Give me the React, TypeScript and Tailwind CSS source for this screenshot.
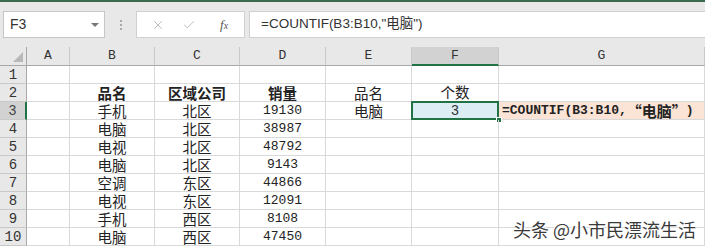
import { X, Check } from 'lucide-react';

const cols = ['A', 'B', 'C', 'D', 'E', 'F', 'G'];

const rows: { b?: string; c?: string; d?: string; e?: string; f?: string; head?: boolean }[] = [
  {},
  { b: '品名', c: '区域公司', d: '销量', e: '品名', f: '个数', head: true },
  { b: '手机', c: '北区', d: '19130', e: '电脑', f: '3' },
  { b: '电脑', c: '北区', d: '38987' },
  { b: '电视', c: '北区', d: '48792' },
  { b: '电脑', c: '北区', d: '9143' },
  { b: '空调', c: '东区', d: '44866' },
  { b: '电视', c: '东区', d: '12091' },
  { b: '手机', c: '西区', d: '8108' },
  { b: '电脑', c: '西区', d: '47450' },
];

const cjk = "font-['Noto_Sans_CJK_SC',sans-serif]";
const mono = "font-['Liberation_Mono','Noto_Sans_CJK_SC',monospace]";
const cell = 'h-[18px] leading-[18px] border-r border-b border-[#d9d9d9] flex items-center justify-center whitespace-nowrap overflow-visible';

export default function App() {
  return (
    <div className="relative w-[705px] h-[247px] overflow-hidden bg-white text-[#222]">
      {/* top strip */}
      <div className="h-[2px] bg-[#3d6b50]" />

      {/* formula bar */}
      <div className="h-[36px] bg-[#e8e8e8] flex items-end pl-[3px]">
        <div className="w-[102px] h-[27px] bg-white border border-[#c6c6c6] flex items-center justify-between pl-[6px] pr-[5px]">
          <span className="font-['Liberation_Sans',sans-serif] text-[14px] text-[#333]">F3</span>
          <span className="w-0 h-0 border-l-[4px] border-r-[4px] border-t-[4px] border-l-transparent border-r-transparent border-t-[#777]" />
        </div>
        <div className="w-[31px] h-[27px] flex flex-col items-center justify-center gap-[2px]">
          <span className="w-[2px] h-[2px] bg-[#aaa]" />
          <span className="w-[2px] h-[2px] bg-[#aaa]" />
          <span className="w-[2px] h-[2px] bg-[#aaa]" />
        </div>
        <div className="w-[109px] h-[27px] bg-white border border-[#d0d0d0] flex items-center pl-[14px]">
          <X className="w-[14px] h-[14px] text-[#b5b5b5]" strokeWidth={1.5} />
          <Check className="w-[14px] h-[14px] text-[#b5b5b5] ml-[17px]" strokeWidth={1.5} />
          <span className="ml-[24px] font-['Liberation_Serif',serif] italic text-[13px] text-[#555]">
            f<span className="text-[10px]">x</span>
          </span>
        </div>
        <div className="ml-[4px] flex-1 h-[27px] bg-white border border-[#d0d0d0] border-r-0 flex items-center pl-[11px]">
          <span className="font-['Liberation_Sans','Noto_Sans_CJK_SC',sans-serif] text-[13.5px] text-[#333]">
            =COUNTIF(B3:B10,"电脑")
          </span>
        </div>
      </div>

      {/* gap above headers */}
      <div className="h-[9px] bg-[#e8e8e8]" />

      {/* sheet */}
      <div className="grid grid-cols-[27px_43px_85px_85px_86px_86px_87px_206px]">
        {/* column headers */}
        <div className="h-[19px] bg-[#e8e8e8] border-r border-b border-[#a8a8a8] flex items-end justify-end pr-[3px] pb-[3px]">
          <svg width="10" height="10" viewBox="0 0 10 10">
            <path d="M10 0 L10 10 L0 10 Z" fill="#b8b8b8" />
          </svg>
        </div>
        {cols.map(c => (
          <div
            key={c}
            className={`h-[19px] border-r border-[#c8c8c8] flex items-center justify-center ${mono} text-[13px] ${
              c === 'F' ? 'bg-[#d2d2d2] border-b-2 border-b-[#217346] text-[#333]' : 'bg-[#e8e8e8] border-b border-b-[#a8a8a8] text-[#333]'
            }`}
          >
            {c}
          </div>
        ))}

        {rows.map((r, i) => {
          const n = i + 1;
          const sel = n === 3;
          const txt = r.head ? 'font-bold' : '';
          return [
            <div
              key={`h${n}`}
              className={`h-[18px] leading-[18px] border-b border-[#c8c8c8] flex items-center justify-center ${mono} text-[14px] ${
                sel ? 'bg-[#d2d2d2] border-r-2 border-r-[#217346] text-[#444]' : 'bg-[#e8e8e8] border-r border-r-[#a8a8a8] text-[#333]'
              }`}
            >
              {n}
            </div>,
            <div key={`a${n}`} className={cell} />,
            <div key={`b${n}`} className={`${cell} ${cjk} text-[14.5px] ${txt}`}>{r.b}</div>,
            <div key={`c${n}`} className={`${cell} ${cjk} text-[14.5px] ${txt}`}>{r.c}</div>,
            <div key={`d${n}`} className={`${cell} ${r.head ? `${cjk} text-[14.5px] font-bold` : `${mono} text-[13px]`}`}>{r.d}</div>,
            <div key={`e${n}`} className={`${cell} ${cjk} text-[14.5px]`}>{r.e}</div>,
            <div
              key={`f${n}`}
              className={`${cell} relative ${sel ? `bg-[#dcedf3] ${mono} text-[14px] text-[#333]` : `${cjk} text-[14.5px] items-end`}`}
            >
              {r.f}
              {sel && (
                <>
                  <span className="absolute -left-[1px] -top-[1px] -right-[1px] -bottom-[1px] border-2 border-[#217346]" />
                  <span className="absolute -right-[4px] -bottom-[4px] w-[6px] h-[6px] bg-[#217346] border border-white" />
                </>
              )}
            </div>,
            <div
              key={`g${n}`}
              className={`${cell} justify-start ${sel ? `bg-[#fbe4d5] pl-[3px] ${mono} text-[13px] font-bold` : ''}`}
            >
              {sel && (
                <>
                  =COUNTIF(B3:B10,
                  <span className={`inline-block w-[15px] text-right ${cjk} text-[15px]`}>“</span>
                  <span className={`${cjk} text-[15px]`}>电脑</span>
                  <span className={`inline-block w-[14px] text-left ${cjk} text-[15px]`}>”</span>)
                </>
              )}
            </div>,
          ];
        })}
      </div>

      {/* watermark */}
      <div
        className={`absolute left-[513px] top-[218px] ${cjk} text-[18px] leading-[22px] text-[#3a3a3a] whitespace-nowrap [text-shadow:0_0_2px_#fff,0_0_2px_#fff,1px_1px_0_#fff,-1px_-1px_0_#fff]`}
      >
        头条 @小市民漂流生活
      </div>
    </div>
  );
}
